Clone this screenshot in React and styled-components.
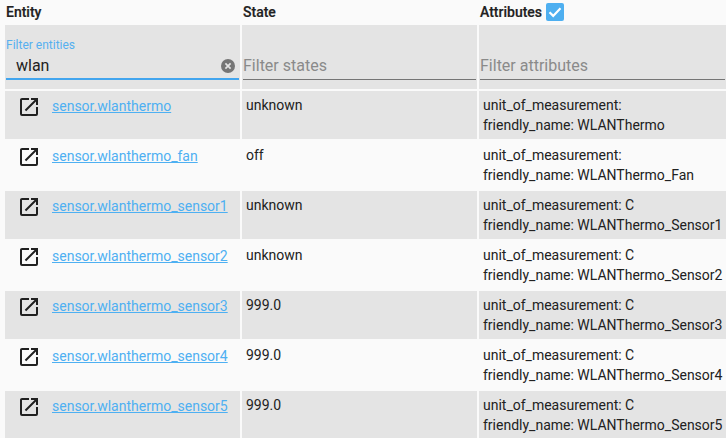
import React from 'react'
import styled, { createGlobalStyle } from 'styled-components'

const GlobalStyle = createGlobalStyle`
  html, body {
    margin: 0;
    height: 100%;
    overflow: hidden;
    background: #fafafa;
    font-family: Roboto, "Liberation Sans", sans-serif;
    color: #212121;
  }
`

const Table = styled.div`
  display: grid;
  grid-template-columns: 235px 235px 1fr;
  column-gap: 2px;
  row-gap: 2px;
  padding: 0 0 0 5px;
  width: 726px;
  box-sizing: border-box;
`

const HeadCell = styled.div`
  height: 23px;
  display: flex;
  align-items: center;
  gap: 4px;
  padding-left: 1px;
  font-size: 14px;
  font-weight: 500;
  -webkit-text-stroke: 0.2px #212121;
`

const CheckBox = styled.span`
  width: 18px;
  height: 18px;
  border-radius: 2px;
  background: #4eaff0;
  display: flex;
  align-items: center;
  justify-content: center;
`

const FilterCell = styled.div`
  height: 64px;
  background: #e4e4e4;
  box-sizing: border-box;
  position: relative;
  padding: 0 1px 0 1px;
  display: flex;
  flex-direction: column;
  justify-content: flex-end;
`

const FilterField = styled.div`
  height: 31px;
  margin-bottom: 9px;
  box-sizing: border-box;
  border-bottom: ${(p) => (p.$active ? '2px solid #42a5ee' : '1px solid #757575')};
  padding-left: ${(p) => (p.$active ? '10px' : '0')};
  font-size: 16px;
  line-height: 24px;
  padding-top: 5px;
  color: ${(p) => (p.$active ? '#212121' : '#8a8a8a')};
`

const FloatLabel = styled.span`
  position: absolute;
  left: 1px;
  top: 13px;
  font-size: 12px;
  line-height: 14px;
  color: #56b0f0;
`

const ClearIcon = styled.svg`
  position: absolute;
  right: 4px;
  top: 33px;
  width: 16px;
  height: 16px;
`

const Cell = styled.div`
  height: 48px;
  box-sizing: border-box;
  background: ${(p) => (p.$odd ? '#e4e4e4' : 'transparent')};
  font-size: 14px;
  line-height: 20px;
  padding: 4px 4px 0 4px;
  white-space: nowrap;
  overflow: hidden;
`

const EntityCell = styled(Cell)`
  display: flex;
  align-items: flex-start;
  gap: 11px;
  padding: 4px 0 0 12px;
`

const EntityLink = styled.a`
  color: #4eb0f2;
  text-decoration: underline;
  line-height: 20px;
  margin-top: 1px;
  cursor: pointer;
`

const OpenIcon = () => (
  <svg width="24" height="24" viewBox="0 0 24 24" fill="#212121">
    <path d="M14,3V5H17.59L7.76,14.83L9.17,16.24L19,6.41V10H21V3M19,19H5V5H12V3H5C3.89,3 3,3.9 3,5V19A2,2 0 0,0 5,21H19A2,2 0 0,0 21,19V12H19V19Z" />
  </svg>
)

const rows = [
  { id: 'sensor.wlanthermo', state: 'unknown', unit: '', name: 'WLANThermo' },
  { id: 'sensor.wlanthermo_fan', state: 'off', unit: '', name: 'WLANThermo_Fan' },
  { id: 'sensor.wlanthermo_sensor1', state: 'unknown', unit: 'C', name: 'WLANThermo_Sensor1' },
  { id: 'sensor.wlanthermo_sensor2', state: 'unknown', unit: 'C', name: 'WLANThermo_Sensor2' },
  { id: 'sensor.wlanthermo_sensor3', state: '999.0', unit: 'C', name: 'WLANThermo_Sensor3' },
  { id: 'sensor.wlanthermo_sensor4', state: '999.0', unit: 'C', name: 'WLANThermo_Sensor4' },
  { id: 'sensor.wlanthermo_sensor5', state: '999.0', unit: 'C', name: 'WLANThermo_Sensor5' },
]

const App = () => {
  return (
    <>
      <GlobalStyle />
      <Table>
        <HeadCell>Entity</HeadCell>
        <HeadCell>State</HeadCell>
        <HeadCell>
          Attributes
          <CheckBox>
            <svg width="18" height="18" viewBox="0 0 18 18" fill="none" stroke="#fff" strokeWidth="2.2">
              <path d="M3.5 9.2l3.7 3.7 7.3-7.6" />
            </svg>
          </CheckBox>
        </HeadCell>

        <FilterCell>
          <FloatLabel>Filter entities</FloatLabel>
          <FilterField $active>wlan</FilterField>
          <ClearIcon viewBox="0 0 16 16">
            <circle cx="8" cy="8" r="7" fill="#757575" />
            <path d="M5.4 5.4l5.2 5.2M10.6 5.4l-5.2 5.2" stroke="#e4e4e4" strokeWidth="1.7" />
          </ClearIcon>
        </FilterCell>
        <FilterCell>
          <FilterField>Filter states</FilterField>
        </FilterCell>
        <FilterCell>
          <FilterField>Filter attributes</FilterField>
        </FilterCell>

        {rows.map((row, i) => (
          <React.Fragment key={row.id}>
            <EntityCell $odd={i % 2 === 0}>
              <OpenIcon />
              <EntityLink>{row.id}</EntityLink>
            </EntityCell>
            <Cell $odd={i % 2 === 0}>{row.state}</Cell>
            <Cell $odd={i % 2 === 0}>
              unit_of_measurement: {row.unit}
              <br />
              friendly_name: {row.name}
            </Cell>
          </React.Fragment>
        ))}
      </Table>
    </>
  )
}

export default App
